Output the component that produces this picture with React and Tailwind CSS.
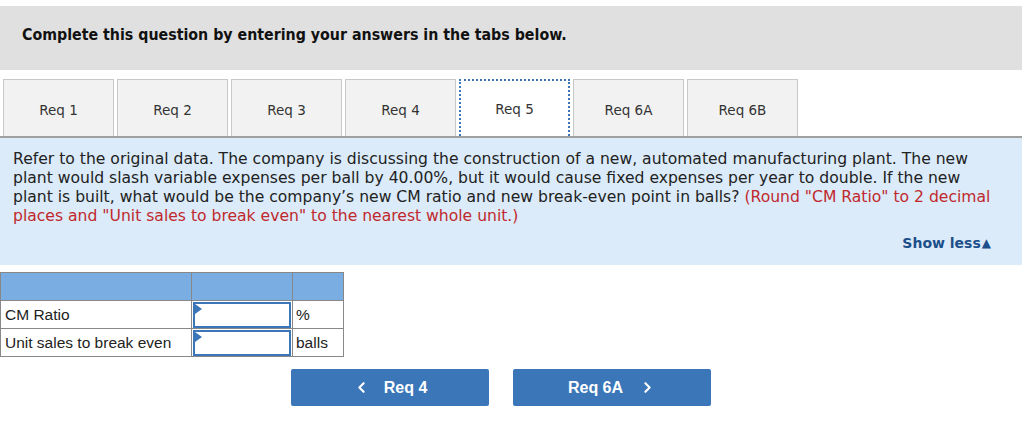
import React from "react";
import { ChevronLeft, ChevronRight } from "lucide-react";

const tabs = ["Req 1", "Req 2", "Req 3", "Req 4", "Req 5", "Req 6A", "Req 6B"];

function AnswerInput() {
  return (
    <div className="relative h-[26px] mx-[1px] border-2 border-[#3a76b8] bg-white">
      <div className="absolute left-0 top-0 w-0 h-0 border-t-[5px] border-b-[5px] border-l-[7px] border-t-transparent border-b-transparent border-l-[#3a76b8]" />
    </div>
  );
}

export default function App() {
  return (
    <div className="w-[1026px] h-[421px] bg-white pt-[6px] text-[#222]">
      <div className="w-[1022px]">
        {/* Header band */}
        <div className="h-[64px] bg-[#e0e0e0] pl-[22px] pt-[16px]">
          <span className="font-['DejaVu_Sans_Condensed','DejaVu_Sans',sans-serif] font-bold text-[15.8px] text-[#111]">
            Complete this question by entering your answers in the tabs below.
          </span>
        </div>

        {/* Tabs */}
        <div className="flex gap-[3px] pl-[3px] mt-[9px] h-[57px] font-['Tahoma','DejaVu_Sans',sans-serif] text-[13.5px] text-[#333]">
          {tabs.map((t) =>
            t === "Req 5" ? (
              <div
                key={t}
                className="w-[111px] bg-white border-2 border-dotted border-b-0 border-[#3a76b8] flex items-center justify-center pt-[2px]"
              >
                {t}
              </div>
            ) : (
              <div
                key={t}
                className="w-[111px] bg-[#f2f2f2] border border-b-0 border-[#c8c8c8] flex items-center justify-center pt-[4px]"
              >
                {t}
              </div>
            )
          )}
        </div>

        {/* Question box */}
        <div className="h-[129px] bg-[#dbebf9] border-t-2 border-[#a0a0a0] px-[13px] pt-[12px] font-['Verdana','DejaVu_Sans',sans-serif] text-[15.6px] leading-[19px] text-[#222] relative">
          <p className="whitespace-nowrap">
            Refer to the original data. The company is discussing the construction of a new, automated manufacturing plant. The new
            <br />
            plant would slash variable expenses per ball by 40.00%, but it would cause fixed expenses per year to double. If the new
            <br />
            plant is built, what would be the company’s new CM ratio and new break-even point in balls?{" "}
            <span className="text-[#c0282d]">(Round "CM Ratio" to 2 decimal</span>
            <br />
            <span className="text-[#c0282d]">places and "Unit sales to break even" to the nearest whole unit.)</span>
          </p>
          <div className="absolute right-[31px] bottom-[12px] flex items-center font-bold text-[14px] text-[#1d4f8a]">
            Show less
            <span className="text-[12px] ml-[1px]">▲</span>
          </div>
        </div>

        {/* Answer table */}
        <table className="mt-[7px] border-collapse font-['Arial','Liberation_Sans',sans-serif] text-[15.5px] text-[#222]">
          <tbody>
            <tr className="h-[28px] bg-[#7aaee3]">
              <td className="w-[191px] border border-[#888]" />
              <td className="w-[101px] border border-[#888]" />
              <td className="w-[51px] border border-[#888]" />
            </tr>
            <tr className="h-[28px]">
              <td className="border border-[#888] px-[4px]">CM Ratio</td>
              <td className="border border-[#888] p-0">
                <AnswerInput />
              </td>
              <td className="border border-[#888] px-[3px]">%</td>
            </tr>
            <tr className="h-[28px]">
              <td className="border border-[#888] px-[4px] whitespace-nowrap">Unit sales to break even</td>
              <td className="border border-[#888] p-0">
                <AnswerInput />
              </td>
              <td className="border border-[#888] px-[3px]">balls</td>
            </tr>
          </tbody>
        </table>

        {/* Navigation */}
        <div className="flex gap-[24px] pl-[291px] mt-[12px] font-['Arial','Liberation_Sans',sans-serif] font-bold text-[16px] text-white">
          <button className="w-[198px] h-[37px] bg-[#3a76b8] rounded-[2px] flex items-center justify-center">
            <ChevronLeft className="w-[17px] h-[17px] mr-[14px]" strokeWidth={3} />
            Req 4
          </button>
          <button className="w-[198px] h-[37px] bg-[#3a76b8] rounded-[2px] flex items-center justify-center">
            Req 6A
            <ChevronRight className="w-[17px] h-[17px] ml-[16px]" strokeWidth={3} />
          </button>
        </div>
      </div>
    </div>
  );
}
